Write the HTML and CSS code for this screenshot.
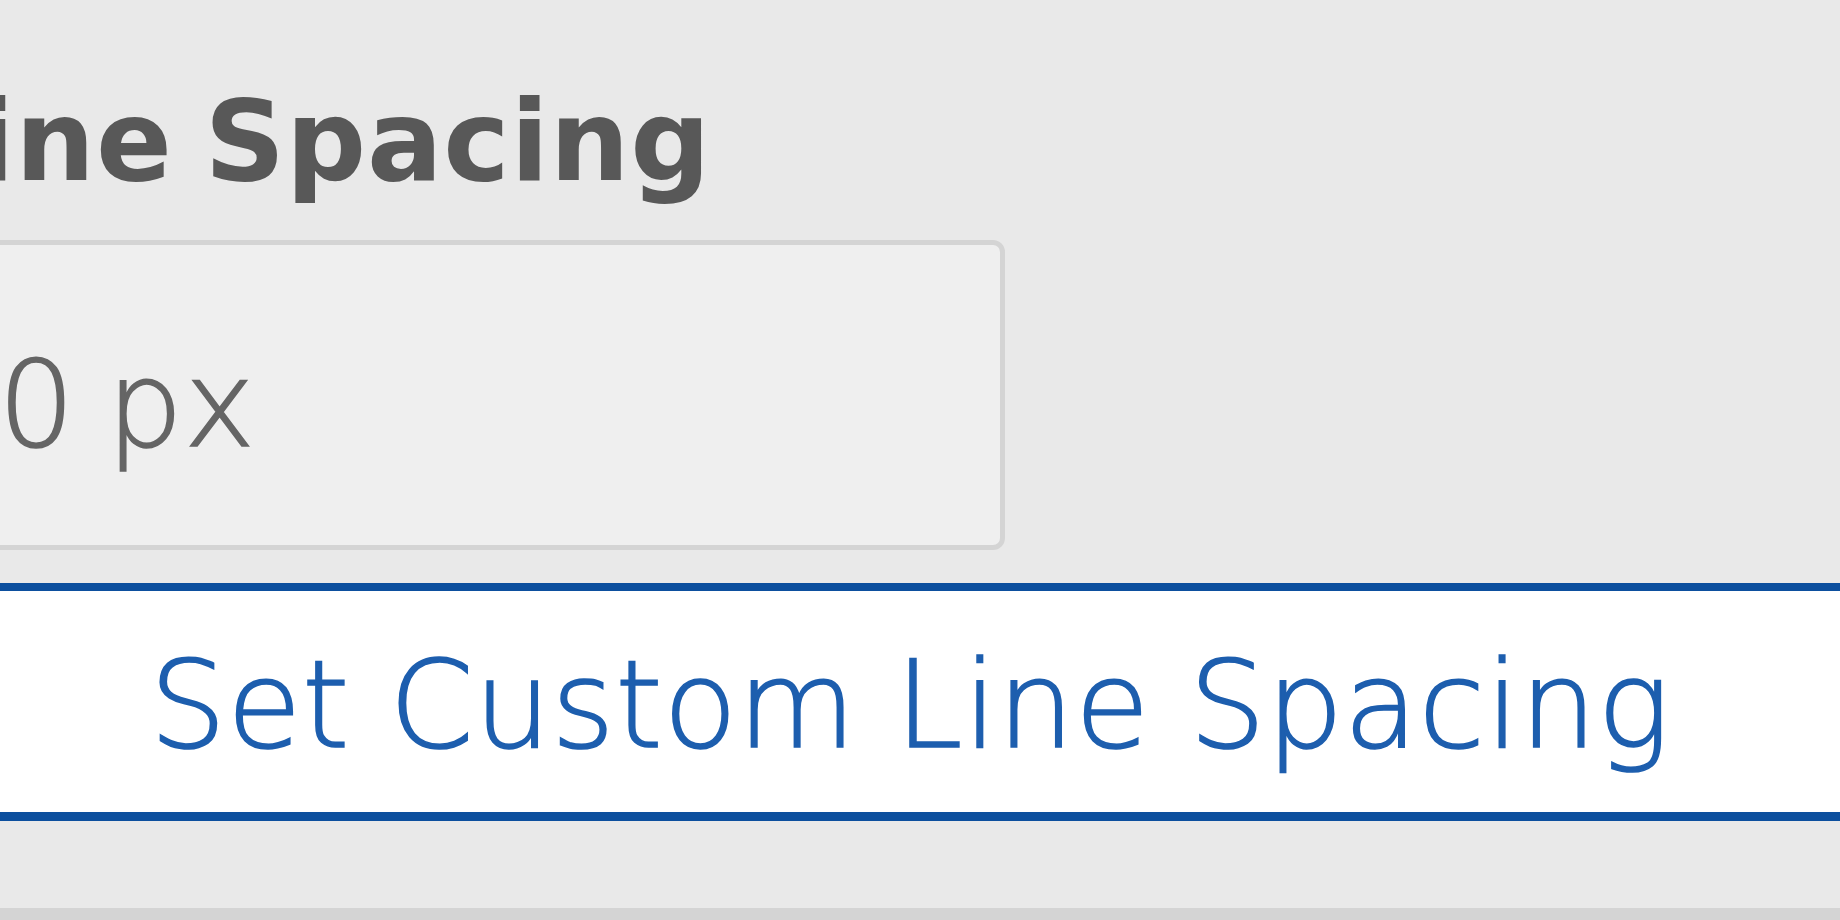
FILE: index.html
```html
<!DOCTYPE html>
<html lang="en">
<head>
<meta charset="utf-8">
<title>Line Spacing</title>
<link rel="stylesheet" href="styles.css">
</head>
<body>
<div class="panel">
  <label class="field-label" for="spacing">Line Spacing</label>
  <div class="field-input" id="spacing">10 px</div>
  <button class="action-btn" type="button">Set Custom Line Spacing</button>
  <div class="panel-footer"></div>
</div>
</body>
</html>
```
FILE: styles.css
```css
html, body {
  margin: 0;
  padding: 0;
  height: 100%;
  overflow: hidden;
}
body {
  background: #e9e9e9;
  font-family: "DejaVu Sans", "Liberation Sans", sans-serif;
}
.panel {
  display: flex;
  flex-direction: column;
  align-items: flex-start;
  padding-top: 85px;
  height: 920px;
  box-sizing: border-box;
}
.field-label {
  display: block;
  margin-left: -96px;
  font-size: 112px;
  line-height: 112px;
  font-weight: bold;
  word-spacing: -8px;
  letter-spacing: 0.8px;
  color: #585858;
  white-space: nowrap;
}
.field-input {
  box-sizing: border-box;
  margin-top: 43px;
  margin-left: -123px;
  width: 1128px;
  height: 310px;
  padding: 100px 0 0 39px;
  background: #efefef;
  border: 5px solid #d4d4d4;
  border-radius: 12px;
  font-size: 120px;
  line-height: 120px;
  font-weight: 200;
  -webkit-text-stroke: 1.6px #656565;
  word-spacing: -8px;
  letter-spacing: 1px;
  color: #656565;
  white-space: nowrap;
}
.action-btn {
  box-sizing: border-box;
  margin-top: 33px;
  margin-left: -123px;
  width: 2066px;
  padding: 54px 0 46px;
  background: #ffffff;
  border: none;
  border-top: 8px solid #0c4f9e;
  border-bottom: 9px solid #0c4f9e;
  font-family: "DejaVu Sans", "Liberation Sans", sans-serif;
  font-size: 121px;
  line-height: 121px;
  font-weight: 200;
  -webkit-text-stroke: 1.6px #1d5eae;
  letter-spacing: 0.6px;
  color: #1d5eae;
  text-align: center;
  white-space: nowrap;
}
.panel-footer {
  margin-top: auto;
  align-self: stretch;
  height: 12px;
  background: #d4d4d4;
}
```
